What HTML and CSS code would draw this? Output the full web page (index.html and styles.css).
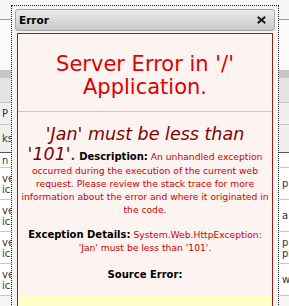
FILE: index.html
```html
<!DOCTYPE html>
<html lang="en">
<head>
  <meta charset="UTF-8">
  <title>Error</title>
  <link rel="stylesheet" href="styles.css">
</head>
<body>
  <div class="backdrop">
    <div class="top"></div>
    <div class="blank"></div>
    <div class="band"></div>
    <div class="row shade"><span></span><span></span></div>
    <div class="row light"><span>P</span><span></span></div>
    <div class="row light tall dark-line"><span>ks</span><span></span></div>
    <div class="row slim"><span>n</span><span></span></div>
    <div class="row item"><span>ve<br>ic</span><span>p</span></div>
    <div class="row item"><span>ve<br>ic</span><span>a</span></div>
    <div class="row item"><span>ve<br>ic</span><span>p<br>pl</span></div>
    <div class="row item"><span>ve<br>ic</span><span>w</span></div>
  </div>

  <div class="dialog">
    <div class="titlebar">
      <span class="title">Error</span>
      <svg class="close" width="9" height="8" viewBox="0 0 9 8">
        <path d="M1.5 1.5 L7.5 6.5 M7.5 1.5 L1.5 6.5" stroke="#1a1a1a" stroke-width="2" stroke-linecap="square"/>
      </svg>
    </div>
    <div class="panel">
      <h1>Server Error in '/' Application.</h1>
      <hr>
      <p class="desc">
        <span class="msg">'Jan' must be less than '101'.</span>
        <b>Description:</b> An unhandled exception occurred during the execution of the current web request. Please review the stack trace for more information about the error and where it originated in the code.
      </p>
      <p>
        <b>Exception Details:</b> System.Web.HttpException: 'Jan' must be less than '101'.
      </p>
      <p class="label"><b>Source Error:</b></p>
      <div class="source"></div>
    </div>
  </div>
</body>
</html>
```

FILE: styles.css
```css
body {
  margin: 0;
  font-family: 'DejaVu Sans', Verdana, sans-serif;
  background: #f6f6f6;
  color: #333;
  overflow: hidden;
}
.backdrop {
  font-size: 10px;
}
.top {
  height: 19px;
  background: #f6f6f6;
  border-bottom: 1px solid #9a9a9a;
}
.blank {
  height: 50px;
  background: #fafafa;
}
.band {
  height: 8px;
  background: #c6c6c6;
}
.row {
  display: flex;
  justify-content: space-between;
  align-items: center;
  background: #fff;
  border-bottom: 1px solid #c8c8c8;
  line-height: 11px;
}
.row span:first-child {
  padding-left: 2px;
}
.row span:last-child {
  width: 7px;
}
.shade {
  height: 24px;
  background: #e3e3e3;
}
.light {
  height: 21px;
  background: #efefef;
}
.tall {
  height: 27px;
}
.dark-line {
  border-bottom: 1px solid #555;
}
.slim {
  height: 14px;
}
.item {
  height: 31px;
}

.dialog {
  position: absolute;
  top: 5px;
  left: 11px;
  width: 260px;
  height: 320px;
  padding: 3px;
  border: 1px dotted #222;
  background: #f4f4f4;
  overflow: hidden;
}
.titlebar {
  display: flex;
  justify-content: space-between;
  align-items: center;
  height: 20px;
  padding: 0 8px 0 3px;
  border: 1px solid #a4a4a4;
  border-radius: 3px;
  background: linear-gradient(#ececec, #c9c9c9);
}
.title {
  font-size: 10.5px;
  font-weight: bold;
  color: #000;
}
.close {
  display: block;
}
.panel {
  margin: 2px 2px 0;
  height: 300px;
  border: 1px solid #9c1c1c;
  background: #fdf4f2;
  text-align: center;
}
h1 {
  margin: 0;
  padding: 19px 4px 0;
  font-size: 21px;
  line-height: 23px;
  font-weight: normal;
  color: #dd0000;
}
hr {
  margin: 12px 0 0;
  border: 0;
  border-top: 1px solid #c6c6c6;
}
p {
  margin: 12px 2px 0;
  font-size: 9.2px;
  line-height: 13px;
  color: #cc0000;
}
.desc {
  margin-top: 12px;
}
.msg {
  font-size: 17.5px;
  line-height: 20px;
  font-style: italic;
  color: #800000;
}
b {
  font-size: 10px;
  color: #000;
}
.label {
  margin-top: 14px;
}
.source {
  margin-top: 14px;
  height: 40px;
  background: #ffffcc;
}
```
